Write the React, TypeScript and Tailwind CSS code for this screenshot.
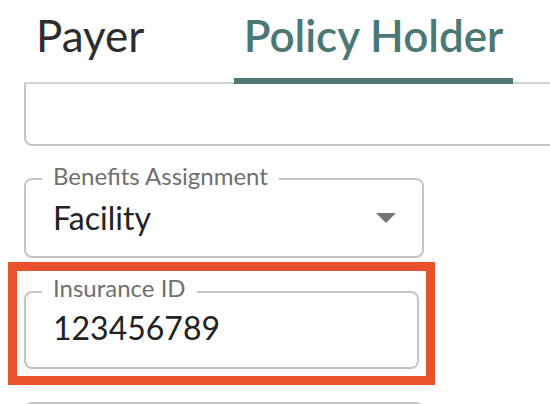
function Caret() {
  return (
    <svg width="20" height="10" viewBox="0 0 20 10" className="shrink-0">
      <path d="M0 0h20L10 10z" fill="#757575" />
    </svg>
  )
}

export default function App() {
  return (
    <div className="w-[550px] h-[404px] overflow-hidden bg-white font-['Lato',sans-serif]">
      {/* tabs */}
      <div className="ml-6 flex h-[84px] border-b-2 border-[#ccd1d1]">
        <div className="w-[210px] pl-3 pt-[13px] text-[44px] leading-none text-[#2d2d2d]">Payer</div>
        <div className="-mb-[2px] w-[279px] border-b-[6px] border-[#4b7775] pt-[13px] text-center text-[44px] font-semibold leading-none text-[#4b7775]">
          Policy Holder
        </div>
      </div>

      {/* clipped field from above */}
      <div className="ml-6 h-[62px] w-[560px] rounded-bl-[8px] border-x-2 border-b-2 border-[#c4c4c4]" />

      {/* benefits select */}
      <div className="relative ml-6 mt-8 flex h-[80px] w-[400px] items-center justify-between rounded-[8px] border-2 border-[#c4c4c4] pl-[27px] pr-[26px]">
        <span className="absolute -top-[16px] left-[16px] bg-white px-[11px] text-[24px] leading-none text-[#6f6f6f]">
          Benefits Assignment
        </span>
        <span className="text-[32px] leading-none text-[#222]">Facility</span>
        <Caret />
      </div>

      {/* highlighted insurance id */}
      <div className="ml-2 mt-1 w-[427px] border-[9px] border-[#ea522e] px-[7px] pb-[7px] pt-5">
        <div className="relative h-[78px] w-full rounded-[8px] border-2 border-[#c4c4c4] pl-[27px] pt-[19px]">
          <span className="absolute -top-[17px] left-[16px] bg-white px-[11px] text-[24px] leading-none text-[#6f6f6f]">
            Insurance ID
          </span>
          <span className="block text-[32px] leading-none text-[#222]">123456789</span>
        </div>
      </div>

      {/* next field, cut off */}
      <div className="ml-6 mt-[17px] h-[80px] w-[400px] rounded-[8px] border-2 border-[#c4c4c4]" />
    </div>
  )
}
